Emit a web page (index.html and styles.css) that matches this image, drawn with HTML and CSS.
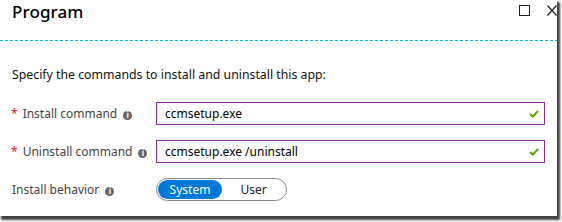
FILE: index.html
```html
<!DOCTYPE html>
<html>
<head>
<meta charset="utf-8">
<link rel="stylesheet" href="styles.css">
</head>
<body>
<div class="panel">
  <div class="header">
    <h1 class="title">Program</h1>
    <div class="controls">
      <span class="max"></span>
      <svg class="close" width="10" height="11" viewBox="0 0 10 11"><path d="M0.5 0.5 L9.5 10.5 M9.5 0.5 L0.5 10.5" stroke="#222" stroke-width="1.2" fill="none"/></svg>
    </div>
  </div>
  <div class="divider"></div>
  <p class="intro">Specify the commands to install and uninstall this app:</p>
  <div class="row">
    <div class="label"><span class="req">*</span>Install command<span class="info">i</span></div>
    <div class="input"><span class="value">ccmsetup.exe</span>
      <svg class="check" width="10" height="8" viewBox="0 0 10 8"><path d="M1 4 L3.8 6.6 L9 1" stroke="#57a300" stroke-width="2" fill="none"/></svg>
    </div>
  </div>
  <div class="row">
    <div class="label"><span class="req">*</span>Uninstall command<span class="info">i</span></div>
    <div class="input"><span class="value">ccmsetup.exe /uninstall</span>
      <svg class="check" width="10" height="8" viewBox="0 0 10 8"><path d="M1 4 L3.8 6.6 L9 1" stroke="#57a300" stroke-width="2" fill="none"/></svg>
    </div>
  </div>
  <div class="row">
    <div class="label plain">Install behavior<span class="info">i</span></div>
    <div class="toggle">
      <span class="opt on">System</span>
      <span class="opt">User</span>
    </div>
  </div>
</div>
</body>
</html>
```
FILE: styles.css
```css
html, body {
  margin: 0;
  padding: 0;
  background: #fff;
}
body {
  width: 562px;
  height: 222px;
  overflow: hidden;
  font-family: "Noto Sans", "Open Sans", sans-serif;
}
.panel {
  width: 557px;
  height: 216px;
  background: #fff;
  box-shadow: 2px 3px 2px 1px rgba(0,0,0,0.75);
  position: relative;
}
.header {
  display: flex;
  align-items: flex-start;
  justify-content: space-between;
  height: 40px;
  padding-left: 12px;
  box-sizing: border-box;
}
.title {
  margin: 0;
  font-weight: 500;
  font-size: 17px;
  line-height: 24px;
  color: #000;
  letter-spacing: 0.1px;
}
.controls {
  display: flex;
  gap: 17px;
  padding-top: 5px;
}
.max {
  width: 9px;
  height: 9px;
  border: 1px solid #222;
}
.close {
  display: block;
}
.divider {
  height: 1px;
  background: repeating-linear-gradient(90deg, #00b4ef 0 3px, transparent 3px 5px);
}
.intro {
  margin: 25px 0 0 12px;
  font-size: 12.3px;
  line-height: 18px;
  color: #111;
}
.row {
  display: flex;
  align-items: center;
  margin-top: 15px;
  height: 23px;
}
.intro + .row {
  margin-top: 18px;
}
.label {
  flex: 0 0 156px;
  padding-left: 11px;
  box-sizing: border-box;
  display: flex;
  align-items: center;
  white-space: nowrap;
  font-size: 12px;
  color: #444;
}
.label.plain {
  padding-left: 12px;
}
.req {
  color: #e81123;
  margin-right: 5px;
}
.info {
  display: inline-flex;
  align-items: center;
  justify-content: center;
  width: 9px;
  height: 9px;
  border-radius: 50%;
  background: #666;
  color: #fff;
  font-size: 8px;
  font-weight: bold;
  margin-left: 6px;
  margin-top: 3px;
  line-height: 1;
}
.input {
  width: 389px;
  height: 23px;
  box-sizing: border-box;
  border: 1.5px solid #8a2aa5;
  display: flex;
  align-items: center;
  justify-content: space-between;
  padding: 0 5px 0 8px;
  font-size: 12px;
  color: #000;
}
.check {
  display: block;
}
.toggle {
  width: 131px;
  height: 23px;
  box-sizing: border-box;
  border: 1px solid #8a8a8a;
  border-radius: 12px;
  display: flex;
  align-items: center;
  padding: 1px;
}
.opt {
  flex: 1;
  height: 19px;
  display: flex;
  align-items: center;
  justify-content: center;
  font-size: 12px;
  color: #222;
  border-radius: 10px;
}
.opt.on {
  background: #0078d7;
  color: #fff;
  flex: 0 0 64px;
}
```
